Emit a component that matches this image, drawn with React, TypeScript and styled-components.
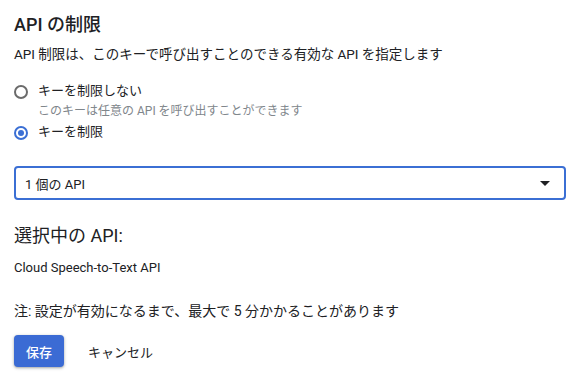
import React from "react";
import styled, { createGlobalStyle } from "styled-components";

const Global = createGlobalStyle`
  html, body { margin: 0; padding: 0; background: #fff; }
  body { font-family: Roboto, "Noto Sans CJK JP", sans-serif; color: #202124; }
`;

const Page = styled.div`
  width: 576px;
  height: 380px;
  box-sizing: border-box;
  padding: 12px 10px 0 14px;
  display: flex;
  flex-direction: column;
`;

const Title = styled.h2<{ $weight?: number; $top?: number }>`
  margin: ${(p) => p.$top ?? 0}px 0 0;
  font-size: 18px;
  line-height: 26px;
  font-weight: ${(p) => p.$weight ?? 500};
  color: #202124;
`;

const Text = styled.p<{ $top?: number; $size?: number }>`
  margin: ${(p) => p.$top ?? 0}px 0 0;
  font-size: ${(p) => p.$size ?? 13}px;
  line-height: 20px;
  color: #202124;
`;

const RadioGroup = styled.div`
  display: flex;
  flex-direction: column;
  gap: 4px;
  margin-top: 18px;
`;

const RadioRow = styled.label`
  display: grid;
  grid-template-columns: 14px 1fr;
  column-gap: 10px;
  align-items: start;
`;

const Circle = styled.span<{ $checked?: boolean }>`
  width: 14px;
  height: 14px;
  box-sizing: border-box;
  border-radius: 50%;
  border: 2px solid ${(p) => (p.$checked ? "#3b6fd4" : "#6b6b6b")};
  margin-top: 3px;
  display: flex;
  align-items: center;
  justify-content: center;
  &::after {
    content: "";
    width: 6px;
    height: 6px;
    border-radius: 50%;
    background: ${(p) => (p.$checked ? "#3b6fd4" : "transparent")};
  }
`;

const RadioLabel = styled.div`
  font-size: 13px;
  line-height: 18px;
  color: #202124;
`;

const RadioHint = styled.div`
  margin-top: 3px;
  font-size: 12px;
  line-height: 16px;
  color: #80868b;
`;

const Select = styled.div`
  margin-top: 25px;
  height: 34px;
  box-sizing: border-box;
  border: 2px solid #3b6fd4;
  border-radius: 4px;
  display: flex;
  align-items: center;
  justify-content: space-between;
  padding: 0 14px 0 9px;
  font-size: 13px;
`;

const Arrow = styled.span`
  width: 0;
  height: 0;
  border-left: 5px solid transparent;
  border-right: 5px solid transparent;
  border-top: 5px solid #202124;
`;

const Actions = styled.div`
  margin-top: 14px;
  display: flex;
  align-items: center;
  gap: 24px;
`;

const Primary = styled.button`
  width: 50px;
  height: 32px;
  border: none;
  border-radius: 4px;
  background: #3b6bd4;
  color: #fff;
  font-family: inherit;
  font-size: 13px;
  font-weight: 500;
  box-shadow: 0 1px 2px rgba(60, 64, 67, 0.3), 0 1px 3px 1px rgba(60, 64, 67, 0.15);
`;

const Ghost = styled.button`
  border: none;
  background: transparent;
  color: #202124;
  font-family: inherit;
  font-size: 13px;
  padding: 0;
`;

export default function App() {
  return (
    <Page>
      <Global />
      <Title>API の制限</Title>
      <Text $top={6} $size={13.5}>API 制限は、このキーで呼び出すことのできる有効な API を指定します</Text>
      <RadioGroup>
        <RadioRow>
          <Circle />
          <div>
            <RadioLabel>キーを制限しない</RadioLabel>
            <RadioHint>このキーは任意の API を呼び出すことができます</RadioHint>
          </div>
        </RadioRow>
        <RadioRow>
          <Circle $checked />
          <RadioLabel>キーを制限</RadioLabel>
        </RadioRow>
      </RadioGroup>
      <Select>
        <span>1 個の API</span>
        <Arrow />
      </Select>
      <Title $weight={400} $top={23}>選択中の API:</Title>
      <Text $top={9}>Cloud Speech-to-Text API</Text>
      <Text $top={23} $size={14}>注: 設定が有効になるまで、最大で 5 分かかることがあります</Text>
      <Actions>
        <Primary>保存</Primary>
        <Ghost>キャンセル</Ghost>
      </Actions>
    </Page>
  );
}
